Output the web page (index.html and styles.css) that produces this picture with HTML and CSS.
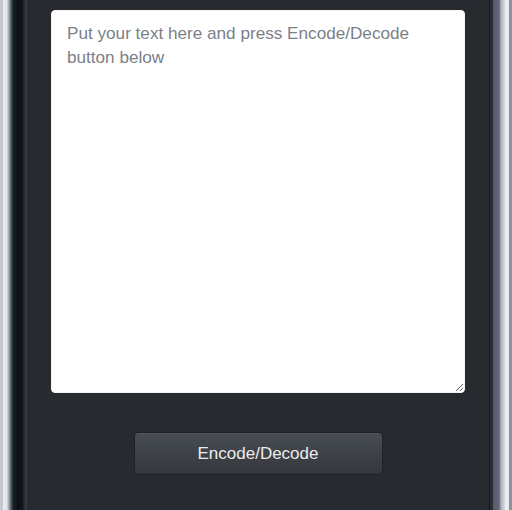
FILE: index.html
```html
<!DOCTYPE html>
<html lang="en">
<head>
  <meta charset="UTF-8">
  <meta name="viewport" content="width=device-width, initial-scale=1.0">
  <link rel="stylesheet" href="styles.css">
  <title>Encode/Decode</title>
</head>
<body>
  <div class="frame">
    <div class="edge edge-left"></div>
    <div class="panel">
      <textarea id="input-text" class="input-text" placeholder="Put your text here and press Encode/Decode button below"></textarea>
      <div class="actions">
        <button id="encode-btn" class="encode-btn">Encode/Decode</button>
      </div>
    </div>
    <div class="edge edge-right"></div>
  </div>
</body>
</html>
```

FILE: styles.css
```css
html, body {
  margin: 0;
  height: 100%;
}

body {
  font-family: 'Liberation Sans', Arial, sans-serif;
  background-color: #272a2f;
  overflow: hidden;
}

.frame {
  display: flex;
  height: 510px;
}

.edge {
  flex: none;
}

.edge-left {
  width: 27px;
  background: linear-gradient(to right,
    #c4c8cc 0, #c4c8cc 3px,
    #eceff1 3px, #dfe3e7 7px,
    #98a0a8 9px, #55606a 11px,
    #1a2126 13px, #0b1014 18px,
    #12171b 23px, #2b2f34 24px,
    #2b2f34 26px, #3b3f45 26px);
}

.edge-right {
  width: 23px;
  background: linear-gradient(to right,
    #15181b 0, #15181b 1px,
    #2a2e34 1px, #2a2e34 4px,
    #555b6a 4px, #606676 10px,
    #aab0b8 12px, #cfd3d8 15px,
    #eef0f2 17px, #e6e9ec 20px,
    #8c939c 20px, #8c939c 23px);
}

.panel {
  flex: 1;
  display: flex;
  flex-direction: column;
  padding: 10px 24px 0;
}

.input-text {
  box-sizing: border-box;
  width: 100%;
  height: 383px;
  margin: 0;
  padding: 10px 15px;
  border: 1px solid #f4f4f4;
  border-radius: 4px;
  background-color: #fff;
  font-family: inherit;
  font-size: 17.15px;
  line-height: 24px;
  color: #333;
  resize: vertical;
}

.input-text::placeholder {
  color: #7b8088;
}

.actions {
  display: flex;
  justify-content: center;
  padding-top: 39px;
}

.encode-btn {
  width: 249px;
  height: 43px;
  border: 1px solid #1e2125;
  border-radius: 4px;
  background: linear-gradient(#484c54, #34373c);
  box-shadow: inset 0 1px 0 rgba(255, 255, 255, 0.06);
  color: #ececec;
  font-family: inherit;
  font-size: 17px;
  cursor: pointer;
}
```
